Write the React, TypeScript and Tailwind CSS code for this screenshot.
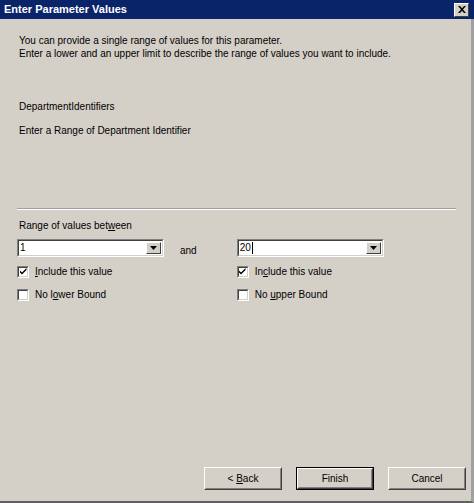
import React from 'react'

const font = { fontFamily: '"Liberation Sans", Arial, sans-serif' }

function Combo({ value, caret }: { value: string; caret?: boolean }) {
  return (
    <div className="flex h-[18px] w-[147px] border border-t-[#808080] border-l-[#808080] border-b-white border-r-white">
      <div className="flex flex-1 border border-t-[#404040] border-l-[#404040] border-b-[#d4d0c8] border-r-[#d4d0c8] bg-white">
        <div className="flex flex-1 items-center pl-[1px] text-[10px] leading-none text-black">
          {value}
          {caret && <span className="ml-[1px] inline-block h-[12px] w-[1px] bg-black" />}
        </div>
        <div className="m-[1px] flex w-[15px] items-center justify-center border border-t-white border-l-white border-b-[#404040] border-r-[#404040] bg-[#d4d0c8]">
          <svg width="7" height="4" viewBox="0 0 7 4">
            <path d="M0 0h7L3.5 4z" fill="#000" />
          </svg>
        </div>
      </div>
    </div>
  )
}

function Check({ checked, children }: { checked?: boolean; children: React.ReactNode }) {
  return (
    <div className="flex items-center gap-[6px] text-[10px] text-black">
      <div className="h-[12px] w-[12px] border border-t-[#808080] border-l-[#808080] border-b-white border-r-white">
        <div className="flex h-full w-full items-center justify-center border border-t-[#404040] border-l-[#404040] border-b-[#d4d0c8] border-r-[#d4d0c8] bg-white">
          {checked && (
            <svg width="7" height="7" viewBox="0 0 7 7">
              <path d="M0 2.5l2 2L6.5 0v2L2 6.5 0 4.5z" fill="#000" />
            </svg>
          )}
        </div>
      </div>
      <span>{children}</span>
    </div>
  )
}

function Btn({ children, def }: { children: React.ReactNode; def?: boolean }) {
  return (
    <div className={'h-[23px] w-[78px] ' + (def ? 'border border-black' : '')}>
      <div className="flex h-full w-full border border-t-white border-l-white border-b-[#404040] border-r-[#404040]">
        <div className="flex flex-1 items-center justify-center whitespace-pre border border-t-[#d4d0c8] border-l-[#d4d0c8] border-b-[#808080] border-r-[#808080] bg-[#d4d0c8] text-[10px] text-black">
          {children}
        </div>
      </div>
    </div>
  )
}

export default function App() {
  return (
    <div className="flex h-[503px] w-[474px] flex-col overflow-hidden bg-[#d4d0c8]" style={font}>
      <div className="flex h-[19px] items-center justify-between bg-[#0a246a] pl-[4px] pr-[5px]">
        <span className="text-[11px] font-bold text-white">Enter Parameter Values</span>
        <div className="flex h-[14px] w-[15px] items-center justify-center border border-t-white border-l-white border-b-[#404040] border-r-[#404040] bg-[#d4d0c8]">
          <svg width="8" height="7" viewBox="0 0 8 7">
            <path d="M0 0h2l2 2.2L6 0h2L5 3.5 8 7H6L4 4.8 2 7H0l3-3.5z" fill="#000" />
          </svg>
        </div>
      </div>
      <div className="flex flex-1 border-r-[3px] border-b-[2px] border-r-[#a0a0a0] border-b-[#606060]">
        <div className="flex flex-1 flex-col pl-[17px] pr-[5px] pt-[15px] text-[10px] leading-[13px] text-black">
          <div className="pl-[2px]">
            <p>You can provide a single range of values for this parameter.</p>
            <p>Enter a lower and an upper limit to describe the range of values you want to include.</p>
          </div>
          <p className="mt-[40px] pl-[2px]">DepartmentIdentifiers</p>
          <p className="mt-[11px] pl-[2px]">Enter a Range of Department Identifier</p>
          <div className="mt-[71px] h-[2px] w-[439px] border-t border-t-[#a0a0a0] border-b border-b-white" />
          <p className="mt-[9px] pl-[2px]">
            Range of values bet<u>w</u>een
          </p>
          <div className="mt-[7px] flex gap-[16px]">
            <div className="flex flex-col">
              <Combo value="1" />
              <div className="mt-[8px]">
                <Check checked>
                  <u>I</u>nclude this value
                </Check>
              </div>
              <div className="mt-[10px]">
                <Check>
                  No l<u>o</u>wer Bound
                </Check>
              </div>
            </div>
            <div className="pt-[5px] text-[10px]">and</div>
            <div className="ml-[24px] flex flex-col">
              <Combo value="20" caret />
              <div className="mt-[8px]">
                <Check checked>
                  In<u>c</u>lude this value
                </Check>
              </div>
              <div className="mt-[10px]">
                <Check>
                  No <u>u</u>pper Bound
                </Check>
              </div>
            </div>
          </div>
          <div className="flex-1" />
          <div className="mb-[11px] flex justify-end gap-[14px]">
            <Btn>
              {'< '}
              <u>B</u>ack
            </Btn>
            <Btn def>Finish</Btn>
            <Btn>Cancel</Btn>
          </div>
        </div>
      </div>
    </div>
  )
}
